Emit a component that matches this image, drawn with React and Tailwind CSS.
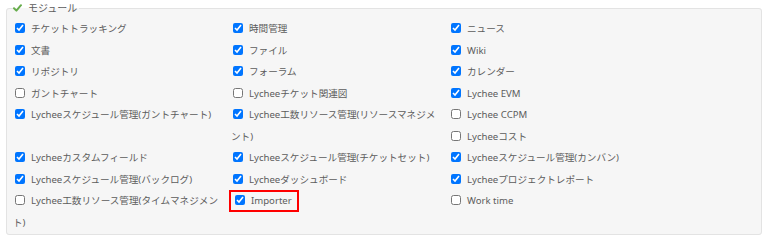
import React from 'react';

const modules = [
    { name: 'チケットトラッキング', on: true },
    { name: '時間管理', on: true },
    { name: 'ニュース', on: true },
    { name: '文書', on: true },
    { name: 'ファイル', on: true },
    { name: 'Wiki', on: true },
    { name: 'リポジトリ', on: true },
    { name: 'フォーラム', on: true },
    { name: 'カレンダー', on: true },
    { name: 'ガントチャート', on: false },
    { name: 'Lycheeチケット関連図', on: false },
    { name: 'Lychee EVM', on: true },
    { name: 'Lycheeスケジュール管理(ガントチャート)', on: true },
    { name: 'Lychee工数リソース管理(リソースマネジメ', rest: 'ント)', on: true },
    { name: 'Lychee CCPM', on: false },
    { name: 'Lycheeコスト', on: false },
    { name: 'Lycheeカスタムフィールド', on: true },
    { name: 'Lycheeスケジュール管理(チケットセット)', on: true },
    { name: 'Lycheeスケジュール管理(カンバン)', on: true },
    { name: 'Lycheeスケジュール管理(バックログ)', on: true },
    { name: 'Lycheeダッシュボード', on: true },
    { name: 'Lycheeプロジェクトレポート', on: true },
    { name: 'Lychee工数リソース管理(タイムマネジメン', rest: 'ト)', on: false },
    { name: 'Importer', on: true, marked: true },
    { name: 'Work time', on: false },
];

const ModuleItem = ({ mod }) => {
    const box = (
        <input
            type="checkbox"
            defaultChecked={mod.on}
            className="w-[10px] h-[10px] m-0 ml-[2px] mr-[6px] align-middle relative top-[-1px]"
        />
    );
    return (
        <label className="float-left w-[218px] leading-[21.5px] whitespace-nowrap">
            {mod.marked ? (
                <span className="inline-block border-2 border-[#ff0000] leading-[18px] -ml-[2px] pl-[2px] pr-[5px]">
                    {box}{mod.name}
                </span>
            ) : (
                <>{box}{mod.name}</>
            )}
            {mod.rest && <><br />{mod.rest}</>}
        </label>
    );
};

export default function App() {
    return (
        <div className="bg-white w-[768px] h-[241px] px-[6px] pt-[1px] text-[9.6px] text-[#5c5c5c] font-['Noto_Sans','Noto_Sans_CJK_JP',sans-serif]">
            <fieldset className="bg-[#f6f6f6] border border-[#e3e3e3] rounded-[3px] px-[6px] pb-[1px]">
                <legend className="flex items-center gap-[6px] leading-[14px] pr-[2px] text-[10px] text-[#5c5c5c]">
                    <svg width="9" height="8" viewBox="0 0 9 8">
                        <path d="M1 4.2 L3.4 6.6 L8 1.2" fill="none" stroke="#67ad4c" strokeWidth="2" strokeLinecap="round" strokeLinejoin="round" />
                    </svg>
                    モジュール
                </legend>
                <div className="flow-root pt-[3px]">
                    {modules.map((m) => (
                        <ModuleItem key={m.name} mod={m} />
                    ))}
                </div>
            </fieldset>
        </div>
    );
}
